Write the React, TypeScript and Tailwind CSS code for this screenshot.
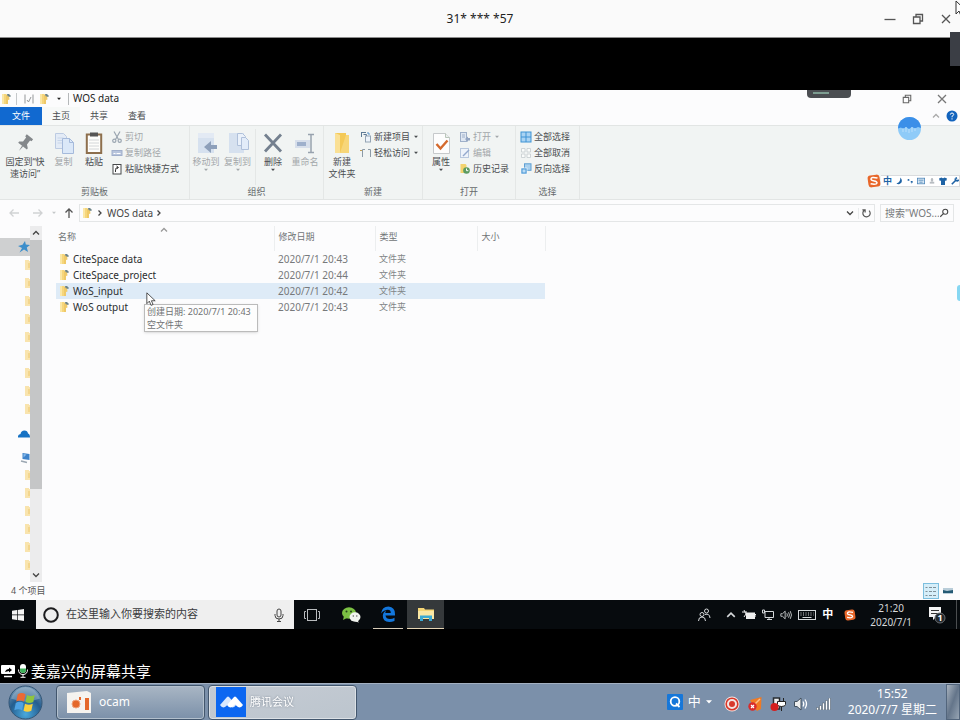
import React, { ReactNode } from "react";

type IconProps = { className?: string };

/* ---------- icons ---------- */

const Folder = ({ className = "h-3 w-3" }: IconProps) => (
  <svg viewBox="0 0 12 12" className={className}>
    <path d="M2 1h4l1 1v9H2z" fill="#f6d67c" />
    <path d="M2 1h2v10H2z" fill="#fbe7a6" />
    <path d="M6 1.500l3 1.500.500 3.500-1.500.500V11H6z" fill="#efc968" />
    <path d="M7 1h2l2 2-1 1-2.500-1z" fill="#6f8488" />
  </svg>
);

const Pin = () => (
  <svg viewBox="0 0 24 24" className="h-6 w-6">
    <g transform="rotate(38 12 12)" fill="#84888b">
      <path d="M8 4h8v2.500l-1.500.500v5l3 2.500v1.500H6.500v-1.500l3-2.500V7L8 6.500z" />
      <path d="M11.300 16h1.400l-.700 6z" />
    </g>
  </svg>
);

const CopyPages = () => (
  <svg viewBox="0 0 24 24" className="h-6 w-6">
    <path d="M3.500 2.500h8l3 3v12h-11z" fill="#e3ebf6" stroke="#bccbe2" />
    <path d="M5.500 7h6M5.500 9.500h6M5.500 12h6" stroke="#c7d5e9" />
    <path d="M10.500 7.500h7l4 4v11h-11z" fill="#dbe8f8" stroke="#a5badb" />
    <path d="M17.500 7.500v4h4" fill="none" stroke="#a5badb" />
  </svg>
);

const Clipboard = () => (
  <svg viewBox="0 0 24 24" className="h-6 w-6">
    <rect x="4.800" y="3.500" width="14.400" height="18.500" fill="#fdfdfb" stroke="#8d6f4d" strokeWidth="2" />
    <rect x="8" y="1.500" width="8" height="4" fill="#555" />
    <path d="M7 9h10M7 12h10M7 15h10M7 18h10" stroke="#d3d6d8" />
  </svg>
);

const Scissors = () => (
  <svg viewBox="0 0 12 12" className="h-3 w-3" fill="none" stroke="#9aa5b0" strokeWidth="1.200">
    <path d="M3 .500l4.500 8M9 .500l-4.500 8" />
    <circle cx="3.300" cy="9.700" r="1.600" />
    <circle cx="8.700" cy="9.700" r="1.600" />
  </svg>
);

const PathIcon = () => (
  <svg viewBox="0 0 12 12" className="h-3 w-3">
    <rect x="1" y="3.500" width="10" height="5" fill="#b7c4dc" stroke="#a1afcb" />
    <path d="M2.500 6.500h2M5.500 6.500h4" stroke="#fff" />
  </svg>
);

const ShortcutPaste = () => (
  <svg viewBox="0 0 12 12" className="h-3 w-3">
    <rect x="2" y="1.500" width="8" height="9.500" fill="#fff" stroke="#46484a" />
    <path d="M4.500 9V6.500q0-2 2.500-2M5.500 3l2 1.500-2 1.500" fill="none" stroke="#333" />
  </svg>
);

const MoveTo = () => (
  <svg viewBox="0 0 24 24" className="h-6 w-6">
    <rect x="4" y="2" width="16" height="20" fill="#d6e1ef" />
    <path d="M4 2h16v5H4z" fill="#e3eaf4" />
    <path d="M10 16l7-6v4h6v4h-6v4z" fill="#8ea0ba" />
  </svg>
);

const CopyTo = () => (
  <svg viewBox="0 0 24 24" className="h-6 w-6">
    <rect x="3" y="2" width="15" height="20" fill="#d6e1ef" />
    <path d="M11.500 2.500h5l3 3v9h-8z" fill="#eaf1fa" stroke="#afc0da" />
    <path d="M15.500 6.500h4l3 3v9h-7z" fill="#e2ecf9" stroke="#afc0da" />
  </svg>
);

const DeleteX = () => (
  <svg viewBox="0 0 24 24" className="h-6 w-6">
    <path d="M4 3.500l16 17M20 3.500L4 20.500" stroke="#74808f" strokeWidth="2.800" />
  </svg>
);

const Rename = () => (
  <svg viewBox="0 0 24 24" className="h-6 w-6">
    <rect x="2" y="9" width="15" height="8" fill="#d7dfeb" />
    <rect x="4" y="11" width="9" height="4" fill="#9eb0cc" />
    <path d="M15 3.500h6M18 3.500v18M15 21.500h6" stroke="#98a2ae" strokeWidth="1.500" fill="none" />
  </svg>
);

const NewFolder = () => (
  <svg viewBox="0 0 24 24" className="h-6 w-6">
    <path d="M5 2h11v20H5z" fill="#f4c957" />
    <path d="M5 2l5 2v18H5z" fill="#fae095" />
    <path d="M16 4h3v18h-9z" fill="#f7d679" />
  </svg>
);

const NewItem = () => (
  <svg viewBox="0 0 12 12" className="h-3 w-3" fill="none">
    <path d="M1 1.500h5M1.500 1v5M3.500 3.500h3v3" stroke="#5d7994" />
    <rect x="5.500" y="5" width="5" height="6" fill="#edf3fa" stroke="#94a4b4" />
    <path d="M7 2h2v2" stroke="#5891c7" />
  </svg>
);

const EasyAccess = () => (
  <svg viewBox="0 0 12 12" className="h-3 w-3" fill="none" stroke="#8c9aa6">
    <path d="M2.500 10V2.500H5M8 2.500h2.500V10" />
    <path d="M0 3.500h2" stroke="#c49f53" />
  </svg>
);

const Properties = () => (
  <svg viewBox="0 0 24 24" className="h-6 w-6">
    <path d="M4.500 2.500h12l4 4v16h-16z" fill="#fdfdfd" stroke="#c6c9cb" />
    <path d="M16.500 2.500v4h4" fill="#ecefee" stroke="#b9c6b9" />
    <path d="M7.500 13l4 4.500 7-8" fill="none" stroke="#d4692c" strokeWidth="2.400" />
  </svg>
);

const OpenIcon = () => (
  <svg viewBox="0 0 12 12" className="h-3 w-3">
    <rect x="1.500" y="1.500" width="6" height="9" fill="#dfe7f2" stroke="#9fb0c9" />
    <path d="M3 4h3M3 6h3" stroke="#9fb0c9" />
    <path d="M6 8l3-2.500v1.500h2v2.500H9V11z" fill="#93a5c2" />
  </svg>
);

const EditIcon = () => (
  <svg viewBox="0 0 12 12" className="h-3 w-3" fill="none">
    <rect x="1.500" y="1.500" width="8" height="9" fill="#eef3fa" stroke="#b9c8de" />
    <path d="M4 9l6-6" stroke="#94a9cd" strokeWidth="1.500" />
  </svg>
);

const HistoryIcon = () => (
  <svg viewBox="0 0 12 12" className="h-3 w-3">
    <path d="M1.500 1h5l1 1v8h-6z" fill="#f3d36f" />
    <circle cx="7.500" cy="7.500" r="3.300" fill="#5c9b60" />
    <path d="M7.500 5.500v2.200h1.800" stroke="#fff" fill="none" />
  </svg>
);

const SelectAll = () => (
  <svg viewBox="0 0 12 12" className="h-3 w-3">
    <rect x=".500" y=".500" width="11" height="11" fill="#3f93d4" />
    <path d="M1.500 1.500h4v4h-4zM6.500 1.500h4v4h-4zM1.500 6.500h4v4h-4zM6.500 6.500h4v4h-4z" fill="#a9d3f3" />
  </svg>
);

const SelectNone = () => (
  <svg viewBox="0 0 12 12" className="h-3 w-3">
    <path d="M1.500 1.500h3.500v3.500H1.500zM7 1.500h3.500v3.500H7zM1.500 7h3.500v3.500H1.500zM7 7h3.500v3.500H7z" fill="#fafcfb" stroke="#c5cbce" strokeWidth=".800" />
  </svg>
);

const Invert = () => (
  <svg viewBox="0 0 12 12" className="h-3 w-3">
    <rect x="4.500" y=".800" width="6.500" height="6.500" fill="#a9d0ee" stroke="#5d9fd2" />
    <rect x="1" y="5" width="6" height="6" fill="#4f9ad6" stroke="#fff" strokeWidth=".600" />
    <rect x="2.500" y="6.500" width="3" height="3" fill="#b9dcf6" />
  </svg>
);

const Restore = ({ className = "h-3 w-3" }: IconProps) => (
  <svg viewBox="0 0 12 12" className={className} fill="none" stroke="currentColor" strokeWidth="1.300">
    <path d="M1.500 4h6.500v6.500H1.500zM4 4V1.500h6.500V8H8" />
  </svg>
);

const Cross = ({ className = "h-3 w-3" }: IconProps) => (
  <svg viewBox="0 0 12 12" className={className} stroke="currentColor" strokeWidth="1.300">
    <path d="M2 2l8 8M10 2l-8 8" />
  </svg>
);

type Dir = "up" | "down" | "right";
const Chevron = ({ dir, className = "h-2 w-2" }: IconProps & { dir: Dir }) => (
  <svg viewBox="0 0 8 8" className={className} fill="none" stroke="currentColor" strokeWidth="1.300">
    <path d={dir === "up" ? "M1 5.500l3-3 3 3" : dir === "down" ? "M1 2.500l3 3 3-3" : "M2.500 1.500L5 4 2.500 6.500"} />
  </svg>
);

const Caret = ({ className = "h-1 w-1" }: IconProps) => (
  <svg viewBox="0 0 4 4" className={className}>
    <path d="M0 .800h4L2 3z" fill="currentColor" />
  </svg>
);

const Arrow = ({ d }: { d: string }) => (
  <svg viewBox="0 0 12 12" className="h-3 w-3" fill="none" stroke="currentColor" strokeWidth="1.300">
    <path d={d} />
  </svg>
);

const Pointer = ({ className = "h-[15px] w-[10px]" }: IconProps) => (
  <svg viewBox="0 0 12 18" className={className}>
    <path d="M1 1v13l3-3 2 5 2.500-1-2-4.500H11z" fill="#fff" stroke="#333" />
  </svg>
);

const SogouMark = ({ className = "h-3 w-3" }: IconProps) => (
  <svg viewBox="0 0 14 14" className={className}>
    <rect x="1" y="1" width="12" height="12" rx="3" fill="#e8672a" transform="rotate(-8 7 7)" />
    <path d="M10.500 4Q4 2.500 4 5q0 1.600 3.200 1.900Q10 7.300 10 8.800 9.500 11 3.600 9.800" stroke="#fff" strokeWidth="1.500" fill="none" />
  </svg>
);

const Speaker = ({ className = "h-3 w-3" }: IconProps) => (
  <svg viewBox="0 0 14 12" className={className} fill="none" stroke="currentColor">
    <path d="M1 4.500h2l3-3v9l-3-3H1z" />
    <path d="M8 4q1.200 2 0 4M10 2.800q2 3.200 0 6.400M12 1.500q2.800 4.500 0 9" />
  </svg>
);

/* ---------- ribbon ---------- */

function BigButton({ icon, lines, caret, dim, width }: { icon: ReactNode; lines: string[]; caret?: boolean; dim?: boolean; width: string }) {
  return (
    <button className={`flex flex-col items-center self-start pt-[2px] ${width} ${dim ? "text-[#a3a7aa]" : "text-[#4a4d50]"}`}>
      {icon}
      <span className="mt-px flex flex-col whitespace-nowrap text-[9px] leading-3">
        {lines.map((l) => (
          <span key={l}>{l}</span>
        ))}
      </span>
      {caret && <Caret />}
    </button>
  );
}

function SmallButton({ icon, label, caret, dim }: { icon: ReactNode; label: string; caret?: boolean; dim?: boolean }) {
  return (
    <button className={`flex h-4 items-center gap-[2px] whitespace-nowrap text-[9px] ${dim ? "text-[#a3a7aa]" : "text-[#4a4d50]"}`}>
      {icon}
      {label}
      {caret && <Caret className="ml-[2px] h-1 w-1" />}
    </button>
  );
}

function Group({ title, width, children }: { title: string; width: string; children: ReactNode }) {
  return (
    <section className={`flex flex-col border-r border-[#e4e7e6] ${width}`}>
      <div className="flex min-h-0 flex-1 pt-[3px]">{children}</div>
      <h2 className="text-center text-[9px] leading-[14px] text-[#666a6c]">{title}</h2>
    </section>
  );
}

function Ribbon() {
  return (
    <div className="flex h-[75px] shrink-0 overflow-hidden border-y border-[#e2e5e4] bg-[#f1f4f3]">
      <Group title="剪贴板" width="w-[190px]">
        <BigButton icon={<Pin />} lines={["固定到“快", "速访问”"]} width="w-[50px]" />
        <BigButton icon={<CopyPages />} lines={["复制"]} dim width="w-[27px]" />
        <BigButton icon={<Clipboard />} lines={["粘贴"]} width="w-[34px]" />
        <div className="flex flex-col">
          <SmallButton icon={<Scissors />} label="剪切" dim />
          <SmallButton icon={<PathIcon />} label="复制路径" dim />
          <SmallButton icon={<ShortcutPaste />} label="粘贴快捷方式" />
        </div>
      </Group>
      <Group title="组织" width="w-[134px]">
        <div className="flex border-r border-[#e4e7e6] pr-[2px]">
          <BigButton icon={<MoveTo />} lines={["移动到"]} caret dim width="w-8" />
          <BigButton icon={<CopyTo />} lines={["复制到"]} caret dim width="w-[31px]" />
        </div>
        <BigButton icon={<DeleteX />} lines={["删除"]} caret width="w-[34px]" />
        <BigButton icon={<Rename />} lines={["重命名"]} dim width="w-[30px]" />
      </Group>
      <Group title="新建" width="w-[99px]">
        <BigButton icon={<NewFolder />} lines={["新建", "文件夹"]} width="w-9" />
        <div className="flex flex-col">
          <SmallButton icon={<NewItem />} label="新建项目" caret />
          <SmallButton icon={<EasyAccess />} label="轻松访问" caret />
        </div>
      </Group>
      <Group title="打开" width="w-[93px]">
        <BigButton icon={<Properties />} lines={["属性"]} caret width="w-9" />
        <div className="flex flex-col">
          <SmallButton icon={<OpenIcon />} label="打开" caret dim />
          <SmallButton icon={<EditIcon />} label="编辑" dim />
          <SmallButton icon={<HistoryIcon />} label="历史记录" />
        </div>
      </Group>
      <Group title="选择" width="w-[64px]">
        <div className="flex flex-col pl-1">
          <SmallButton icon={<SelectAll />} label="全部选择" />
          <SmallButton icon={<SelectNone />} label="全部取消" />
          <SmallButton icon={<Invert />} label="反向选择" />
        </div>
      </Group>
    </div>
  );
}

/* ---------- explorer ---------- */

function ExplorerTitle() {
  return (
    <div className="flex h-[17px] shrink-0 items-center text-[10px] text-[#222]">
      <Folder />
      <span className="ml-1 h-3 w-px bg-[#c5c8ca]" />
      <svg viewBox="0 0 10 12" className="ml-[7px] h-3 w-[10px]" fill="none" stroke="#949799">
        <path d="M1 1.500v9M9 1.500v9M3 7l1.500 2L7 4" />
      </svg>
      <Folder className="ml-1 h-3 w-3" />
      <Caret className="ml-[7px] h-1 w-1" />
      <span className="ml-[7px] h-3 w-px bg-[#b5b8ba]" />
      <span className="ml-1">WOS data</span>
      <span className="flex-1" />
      <button aria-label="还原" className="text-[#666]">
        <Restore className="h-[10px] w-[10px]" />
      </button>
      <button aria-label="关闭" className="mx-3 ml-6 text-[#777]">
        <Cross />
      </button>
    </div>
  );
}

function Tabs() {
  return (
    <nav className="flex h-[18px] shrink-0 items-stretch text-[9px] text-[#4a4d50]">
      <button className="w-[42px] bg-[#1169d0] text-white">文件</button>
      <button className="w-[38px] bg-[#f7f9f8]">主页</button>
      <button className="w-[38px]">共享</button>
      <button className="w-[38px]">查看</button>
      <span className="flex-1" />
      <button aria-label="折叠功能区" className="text-[#aaa]">
        <Chevron dir="up" />
      </button>
      <button aria-label="帮助" className="mr-[2px] ml-[6px] self-center">
        <svg viewBox="0 0 12 12" className="h-3 w-3">
          <circle cx="6" cy="6" r="5.500" fill="#1263bd" />
          <path d="M4.300 4.600Q4.500 3 6 3t1.700 1.400Q7.700 5.500 6 6.300v1M6 8.300v1.200" stroke="#fff" fill="none" />
        </svg>
      </button>
    </nav>
  );
}

function AddressBar() {
  return (
    <div className="flex h-[26px] shrink-0 items-center text-[10px] text-[#444]">
      <button aria-label="后退" className="ml-2 text-[#d0d2d3]"><Arrow d="M11 6H2M5.500 2.500L2 6l3.500 3.500" /></button>
      <button aria-label="前进" className="ml-3 text-[#d0d2d3]"><Arrow d="M1 6h9M6.500 2.500L10 6l-3.500 3.500" /></button>
      <Caret className="ml-2 h-1 w-1 text-[#c5c8ca]" />
      <button aria-label="上移" className="ml-[7px] text-[#555]"><Arrow d="M6 11V2M2.500 5.500L6 2l3.500 3.500" /></button>
      <div className="ml-1 flex h-[18px] flex-1 items-center border border-[#e4e6e7] pl-px">
        <Folder />
        <Chevron dir="right" className="mx-[3px] h-2 w-2" />
        <span>WOS data</span>
        <Chevron dir="right" className="ml-[2px] h-2 w-2" />
        <span className="flex-1" />
        <button aria-label="历史位置" className="mr-1"><Chevron dir="down" /></button>
        <button aria-label="刷新" className="border-l border-[#e9ebec] pr-[2px] pl-[2px]">
          <svg viewBox="0 0 12 12" className="h-[11px] w-[11px]" fill="none" stroke="#555" strokeWidth="1.300">
            <path d="M8.800 2.800a4 4 0 1 1-5.200-.300M1.500 2h3v3" />
          </svg>
        </button>
      </div>
      <label className="mr-[6px] ml-[5px] flex h-[18px] w-[74px] items-center border border-[#e4e6e7] pl-1">
        <input aria-label="搜索 WOS data" placeholder={'搜索"WOS...'} className="w-[54px] bg-transparent text-[10px] outline-none placeholder:text-[#77797b]" />
        <svg viewBox="0 0 12 12" className="h-[10px] w-[10px]" fill="none" stroke="#444" strokeWidth="1.300">
          <circle cx="7.500" cy="4.500" r="3" />
          <path d="M5.300 6.800L1.500 10.500" />
        </svg>
      </label>
    </div>
  );
}

function NavFolder() {
  return (
    <li className="flex h-[18px] items-center justify-end">
      <svg viewBox="0 0 5 12" className="h-3 w-[5px]">
        <path d="M0 1h4v1h1v9H0z" fill="#f9e4ae" />
        <path d="M3 4h2v5H3z" fill="#f3d68f" />
      </svg>
    </li>
  );
}

function NavPane() {
  return (
    <div className="flex w-[42px] shrink-0">
      <ul className="w-[30px] overflow-hidden pt-3">
        <li className="flex h-[18px] items-center justify-end bg-[#cfd0d1]">
          <svg viewBox="0 0 12 12" className="h-3 w-3">
            <path d="M7 0l.800 3.500L12 4 8.800 6.500 10 11 6 8.500 1.500 11.500 4 7 0 5l4.500-1.200z" fill="#3c8ecb" />
          </svg>
        </li>
        {Array.from({ length: 9 }, (_, i) => <NavFolder key={i} />)}
        <li className="flex h-8 items-center justify-end">
          <svg viewBox="0 0 12 8" className="h-2 w-3">
            <path d="M0 7.500Q-.500 4.500 2.500 4 3 .500 6.500.500 9.500.500 10 3.500 12 4 12 7.500z" fill="#1672c4" />
          </svg>
        </li>
        <li className="flex h-4 items-center justify-end">
          <svg viewBox="0 0 10 12" className="h-3 w-[10px]">
            <path d="M2.500 1L9.500 2v6l-7-1z" fill="#3f83ca" />
            <path d="M3.500 2l3 .500-3 3z" fill="#8abcec" />
            <path d="M1 9l6 1.500" stroke="#9ba7b2" strokeWidth="1.500" />
          </svg>
        </li>
        {Array.from({ length: 6 }, (_, i) => <NavFolder key={i} />)}
      </ul>
      <div className="flex w-3 flex-col items-center bg-[#ececed] text-[#444]">
        <Chevron dir="up" className="my-[3px] h-2 w-2 shrink-0" />
        <div className="w-full grow-[76] bg-[#c5c6c7]" />
        <div className="grow-[24]" />
        <Chevron dir="down" className="my-[3px] h-2 w-2 shrink-0" />
      </div>
    </div>
  );
}

const files = [
  { name: "CiteSpace data", date: "2020/7/1 20:43" },
  { name: "CiteSpace_project", date: "2020/7/1 20:44" },
  { name: "WoS_input", date: "2020/7/1 20:42" },
  { name: "WoS output", date: "2020/7/1 20:43" },
];

function FileList() {
  return (
    <div className="relative flex-1 pl-[14px]">
      <Chevron dir="up" className="absolute top-0 left-[118px] h-2 w-2 text-[#999]" />
      <table className="w-[489px] table-fixed border-collapse text-left text-[10px]">
        <colgroup>
          <col className="w-[218px]" />
          <col className="w-[101px]" />
          <col className="w-[102px]" />
          <col className="w-[68px]" />
        </colgroup>
        <thead>
          <tr className="h-[25px] text-[9px] text-[#707476]">
            {["名称", "修改日期", "类型", "大小"].map((h) => (
              <th key={h} className="border-r border-[#eceeef] p-0 pb-1 pl-1 font-normal first:pl-[2px]">{h}</th>
            ))}
          </tr>
        </thead>
        <tbody>
          {files.map((f) => (
            <tr key={f.name} className={f.name === "WoS_input" ? "bg-[#deebf7]" : ""}>
              <td className="h-4 p-0 leading-4 text-[#2a2c2e]">
                <span className="flex items-center gap-[3px] pl-[2px]">
                  <Folder />
                  {f.name}
                </span>
              </td>
              <td className="p-0 pl-1 leading-4 text-[#77797b]">{f.date}</td>
              <td className="p-0 pl-1 text-[9px] leading-4 text-[#818587]">文件夹</td>
              <td className="p-0" />
            </tr>
          ))}
        </tbody>
      </table>
      <div role="tooltip" className="absolute top-[78px] left-[102px] border border-[#bbb] bg-[#fdfdfd] pr-[6px] pl-[2px] text-[9px] leading-[13px] whitespace-nowrap text-[#707274] shadow-sm">
        <p>创建日期: 2020/7/1 20:43</p>
        <p>空文件夹</p>
      </div>
      <div className="absolute top-[66px] left-[104px]"><Pointer /></div>
    </div>
  );
}

function SogouBar() {
  return (
    <div className="absolute top-[84px] right-0 flex items-center">
      <SogouMark className="z-10 h-[14px] w-[14px]" />
      <div className="flex h-3 items-center gap-1 border border-l-0 border-[#dadcde] bg-white pl-[2px] text-[9px] font-bold text-[#1e63a5]">
        <span>中</span>
        <svg viewBox="0 0 8 8" className="h-2 w-[7px]"><path d="M5 0q4 5-1 7.500-2 .500-3.500-1Q5 6 5 0z" fill="#1e63a5" /></svg>
        <svg viewBox="0 0 8 8" className="h-2 w-[6px]" fill="#1e63a5"><circle cx="2" cy="2.500" r="1.300" /><path d="M5 4h2.500v2L6 7.500V6H5z" /></svg>
        <svg viewBox="0 0 10 8" className="h-2 w-2"><rect x=".500" y=".500" width="9" height="7" fill="#d6e6f4" stroke="#4d86b8" /><path d="M2 3h6M3 5.500h4" stroke="#4d86b8" /></svg>
        <svg viewBox="0 0 8 8" className="h-2 w-[6px]" fill="#b7bcc1"><rect x="2.500" width="3" height="5" rx="1.500" /><path d="M1 5h6v2.500H1z" /></svg>
        <svg viewBox="0 0 8 8" className="h-2 w-2" fill="#1e63a5"><path d="M0 1.500L2.500.500q1.500 1.500 3 0L8 1.500 7.200 4 6 3.500V8H2V3.500L.800 4z" /></svg>
        <svg viewBox="0 0 8 8" className="h-2 w-2" fill="none" stroke="#1e63a5" strokeWidth="1.600"><path d="M.800 7.200l4-4M4.200 1.500q0 2.500 2.800 2.500M7 4l.500-1.500M4.500 1.500L6 .800" /></svg>
      </div>
    </div>
  );
}

function Explorer() {
  return (
    <main className="relative flex flex-1 flex-col overflow-hidden bg-[#fcfcfd]">
      <ExplorerTitle />
      <Tabs />
      <Ribbon />
      <AddressBar />
      <div className="flex flex-1">
        <NavPane />
        <FileList />
      </div>
      <footer className="flex h-[18px] shrink-0 items-center pr-[7px] pl-[11px] text-[9px] text-[#555]">
        <span className="flex-1">4 个项目</span>
        <button aria-label="详细信息" className="mr-1 border border-[#7dbfdf] bg-[#d6eef9]">
          <svg viewBox="0 0 14 14" className="h-[14px] w-[14px]" stroke="#7f9099">
            <path d="M1.500 3.500h2M5 3.500h3M9 3.500h3M1.500 7.500h2M5 7.500h3M9 7.500h3M1.500 11.500h2M5 11.500h3M9 11.500h3" />
          </svg>
        </button>
        <button aria-label="大图标">
          <svg viewBox="0 0 10 6" className="h-[6px] w-[10px]">
            <rect width="10" height="6" fill="#b9cdd9" />
            <path d="M0 2l4 1 6-1v3H0z" fill="#245a74" />
          </svg>
        </button>
      </footer>

      <div className="absolute top-0 right-[109px] h-2 w-11 rounded-b bg-[#4b4e52]">
        <div className="mt-[2px] ml-[6px] h-[2px] w-4 bg-[#7d9d91]" />
      </div>
      <div className="absolute top-[27px] right-[39px] h-[23px] w-[23px] overflow-hidden rounded-full bg-[#8fcbf8]">
        <svg viewBox="0 0 23 23">
          <path d="M0 0h23v11l-3-1-3 1.500-3-1.500-3 2-3-2-3 2-2-1.500-3 1z" fill="#3b8fe8" />
          <path d="M5 11v4M8 10v5M11 12v4M14 10v5M17 11v3" stroke="#b9defb" />
        </svg>
      </div>
      <SogouBar />
      <div className="absolute top-[195px] right-0 h-4 w-[3px] rounded-l-full bg-[#86d7f2]" />
    </main>
  );
}

/* ---------- shared screen taskbar ---------- */

function SharedTaskbar() {
  return (
    <div className="flex h-[29px] shrink-0 items-center bg-[#070b0e] text-[#d5d8da]">
      <button aria-label="开始" className="flex w-9 justify-center">
        <svg viewBox="0 0 12 12" className="h-3 w-3" fill="#f3f3f3">
          <path d="M0 1.700l5-.700v4.600H0zM5.700.900L12 0v5.600H5.700zM0 6.300h5v4.700l-5-.700zM5.700 6.300H12V12l-6.300-.900z" />
        </svg>
      </button>
      <label className="flex h-full w-[258px] items-center bg-[#efefef] px-[7px]">
        <svg viewBox="0 0 16 16" className="h-4 w-4" fill="none" stroke="#1c1c1e" strokeWidth="2">
          <circle cx="8" cy="8" r="6.800" />
        </svg>
        <input aria-label="在这里输入你要搜索的内容" placeholder="在这里输入你要搜索的内容" className="ml-[7px] w-full min-w-0 flex-1 bg-transparent text-[11px] outline-none placeholder:text-[#3b3c3e]" />
        <svg viewBox="0 0 12 14" className="mr-[2px] h-[14px] w-3" fill="none" stroke="#444">
          <rect x="4" y="1" width="4" height="8" rx="2" />
          <path d="M2 6v1.500q0 3.500 4 3.500t4-3.500V6M6 11v2.500M4 13.500h4" />
        </svg>
      </label>
      <button aria-label="任务视图" className="flex w-9 justify-center">
        <svg viewBox="0 0 16 12" className="h-3 w-4" fill="none" stroke="#b9bcbe">
          <rect x="3.500" y=".500" width="9" height="11" />
          <path d="M2 2.500H.500v7H2M14 2.500h1.500v7H14" />
        </svg>
      </button>
      <button aria-label="微信" className="ml-[2px] flex w-[37px] justify-center">
        <svg viewBox="0 0 20 16" className="h-4 w-5">
          <ellipse cx="8" cy="6" rx="7" ry="5.800" fill="#7bc143" />
          <path d="M3 9l-1 4 4-2z" fill="#7bc143" />
          <circle cx="5.500" cy="4.500" r="1" fill="#24421a" />
          <circle cx="10" cy="4.500" r="1" fill="#24421a" />
          <ellipse cx="14" cy="10" rx="5.500" ry="4.700" fill="#f1f4ef" />
          <path d="M16 13l2 2.500-4-1z" fill="#f1f4ef" />
          <circle cx="12.300" cy="9" r=".700" fill="#555" />
          <circle cx="15.800" cy="9" r=".700" fill="#555" />
        </svg>
      </button>
      <button aria-label="Edge" className="mr-1 ml-1 flex h-full w-[30px] items-center justify-center border-b border-[#d8cdb9]">
        <svg viewBox="0 0 16 16" className="h-4 w-4">
          <path d="M1 7.500Q2 .500 8.500.500 15 1 15 8v1.500H5.500q.500 3.500 4.500 3.500 2.500 0 4.500-1.200V15Q12 16 9.300 16 2.500 15.500 2.800 9.500 3.200 6 6.500 4.300 5.300 5.500 5.300 7h5.500q0-3.200-3-3.200Q4 3.800 1 7.500z" fill="#1377dc" />
        </svg>
      </button>
      <button aria-label="文件资源管理器" className="flex h-full w-[37px] items-center justify-center border-b border-[#e6d6b5] bg-[#35393b]">
        <svg viewBox="0 0 16 14" className="h-[14px] w-4">
          <path d="M0 1h6l1 1.500h9V12H0z" fill="#f4d575" />
          <path d="M0 4h16v8H0z" fill="#fae7a4" />
          <path d="M2 14V8.500h12V14h-3v-3H5v3z" fill="#3ba9d3" />
        </svg>
      </button>
      <span className="flex-1" />
      <div className="flex items-center gap-[6px]">
        <svg viewBox="0 0 14 14" className="mr-[9px] h-[14px] w-[14px]" fill="none" stroke="currentColor">
          <circle cx="5" cy="6.500" r="2" /><path d="M1.500 13q0-4 3.500-4t3.500 4" /><circle cx="9.500" cy="3" r="2" /><path d="M8 6.500q4.500-1.500 5 3.500" />
        </svg>
        <Chevron dir="up" className="h-[10px] w-[10px]" />
        <svg viewBox="0 0 14 10" className="h-[10px] w-[14px]">
          <rect x="4" y="2.500" width="9" height="6.500" fill="#eee" /><path d="M0 2h5M2 0l2 4-2 3M13 4.500h1v2.500" stroke="#eee" fill="none" />
        </svg>
        <svg viewBox="0 0 12 12" className="h-3 w-3" fill="none" stroke="currentColor">
          <path d="M3 2.500h8.500v6H3zM5 10.500h5M7 8.500v2M.500 1h2v3h-2z" />
        </svg>
        <Speaker />
        <svg viewBox="0 0 18 12" className="h-3 w-[18px]" fill="none" stroke="currentColor">
          <rect x=".500" y="1.500" width="17" height="9" /><path d="M2.500 4h13M2.500 6h13" strokeDasharray="1 1.500" /><path d="M4.500 8.500h9" />
        </svg>
        <span className="text-[11px] font-bold text-white">中</span>
        <span className="ml-[5px]"><SogouMark /></span>
      </div>
      <div className="ml-[14px] text-center text-[10px] leading-[14px] whitespace-nowrap">
        <p>21:20</p>
        <p>2020/7/1</p>
      </div>
      <button aria-label="通知" className="relative mr-[10px] ml-4">
        <svg viewBox="0 0 18 18" className="h-[18px] w-[18px]">
          <path d="M1 1h12v10H8l-3 3v-3H1z" fill="#f3f3f3" />
          <path d="M3 4.500h8M3 7.500h8" stroke="#333" />
          <circle cx="12" cy="12" r="5" fill="#23282c" stroke="#6c7074" />
        </svg>
        <span className="absolute right-0 bottom-0 w-3 text-center text-[9px] leading-3 font-bold text-white">1</span>
      </button>
      <span className="mr-[3px] h-full w-px bg-[#4b4e50]" />
    </div>
  );
}

/* ---------- host taskbar ---------- */

function HostTaskbar() {
  return (
    <div className="flex h-[37px] shrink-0 items-center border-t border-[#a3b0c1] bg-[#7b90aa] text-white">
      <button aria-label="开始" className="flex w-14 pl-2">
        <svg viewBox="0 0 36 36" className="h-[35px] w-[35px]">
          <defs>
            <radialGradient id="orb" cx=".5" cy=".85" r=".8">
              <stop offset="0" stopColor="#49a9dd" /><stop offset=".6" stopColor="#245d8f" /><stop offset="1" stopColor="#6b91b1" />
            </radialGradient>
          </defs>
          <circle cx="18" cy="18" r="17" fill="url(#orb)" stroke="#335575" />
          <path d="M3 14Q8 2 18 2t15 12Q18 20 3 14z" fill="#fff" opacity=".25" />
          <path d="M10 9.500q4-2.500 8 0l-1.500 7.500q-4-2.200-8 0z" fill="#ec6a35" />
          <path d="M19.500 10.200q4 2.200 8 0L26 17.500q-4 2.200-8 0z" fill="#8fc53f" />
          <path d="M8 18.500q4-2.500 8 0L14.500 26q-4-2.200-8 0z" fill="#4fa2e4" />
          <path d="M17.500 19.200q4 2.200 8 0L24 26.500q-4 2.200-8 0z" fill="#fbcf3c" />
        </svg>
      </button>
      <button className="flex h-[35px] w-[149px] items-center rounded-sm border border-[#42566d] bg-linear-to-b from-[#a9b6c4] to-[#7b90a9] pl-[10px] text-xs shadow-[inset_0_0_0_1px_#b3c0cd]">
        <svg viewBox="0 0 24 22" className="mr-2 h-[22px] w-6">
          <path d="M0 2l20-2 4 2v20H0z" fill="#f5f3ef" />
          <circle cx="9" cy="13" r="4" fill="#e4682b" stroke="#efa27e" strokeWidth="1" />
          <path d="M18 7h4v12h-4zM12 6h2v3h-2z" fill="#e4682b" />
        </svg>
        ocam
      </button>
      <button className="ml-[3px] flex h-[35px] w-[149px] items-center rounded-sm border border-[#42566d] bg-linear-to-br from-[#c5cbd3] to-[#bcc5ce] pl-[7px] text-[11px] shadow-[inset_0_0_0_1px_#dce1e6]">
        <svg viewBox="0 0 30 30" className="mr-1 h-[30px] w-[30px]">
          <rect width="30" height="30" fill="#0c67f1" />
          <path d="M4 18l7-8q1-1 2 0l7 8q-2 3.500-5 2l-3-2.500-3 2.500q-3 1.500-5-2z" fill="#d9e8fd" />
          <path d="M11 18l7-8q1-1 2 0l7 8q-2 3.500-5 2l-3-2.500-3 2.500q-3 1.500-5-2z" fill="#fff" />
        </svg>
        <span className="drop-shadow-[0_0_1px_#7f8996]">腾讯会议</span>
      </button>
      <span className="flex-1" />
      <div className="flex items-center">
        <svg viewBox="0 0 16 16" className="h-4 w-4">
          <rect width="16" height="16" rx="1" fill="#1677d9" />
          <circle cx="8" cy="7.500" r="4.300" fill="none" stroke="#fff" strokeWidth="1.800" /><path d="M9 9.500l3.500 3.500" stroke="#fff" strokeWidth="1.800" />
        </svg>
        <span className="ml-[5px] text-[13px]">中</span>
        <Caret className="mr-3 ml-[5px] h-[6px] w-[6px]" />
        <svg viewBox="0 0 16 16" className="mt-[3px] mr-2 h-4 w-4">
          <circle cx="8" cy="8" r="7.500" fill="#f3e6e4" /><circle cx="8" cy="8" r="5.800" fill="none" stroke="#d8392c" strokeWidth="1.600" /><circle cx="8" cy="8" r="3" fill="#d8392c" />
        </svg>
        <svg viewBox="0 0 14 14" className="mt-[3px] mr-2 h-[14px] w-[14px]">
          <path d="M2 3L13.500 0 13 12 9 14 5 9z" fill="#f07a24" /><path d="M6 8l6-6" stroke="#fbc08c" strokeWidth="1.500" />
          <circle cx="4.500" cy="9.500" r="4.200" fill="#d92b2b" /><path d="M3 8l3 3M6 8l-3 3" stroke="#fff" strokeWidth="1.200" />
        </svg>
        <svg viewBox="0 0 16 16" className="mt-[3px] mr-2 h-4 w-4">
          <rect x="3.500" y="2" width="6" height="11" fill="#eee" stroke="#2a2f34" strokeWidth="1.500" /><path d="M9.500 2v4M13.500 2v4M7.500 5.500h8v3q0 2-4 2t-4-2zM11.500 10.500V15" fill="#fff" stroke="#222" />
          <circle cx="4.500" cy="11" r="4" fill="#d51f1f" />
        </svg>
        <svg viewBox="0 0 14 14" className="mt-[3px] mr-2 h-[14px] w-[14px]" fill="none" stroke="#fff">
          <path d="M.500 4.500H3l4-3.500v12L3 9.500H.500z" fill="#eee" stroke="#42505f" /><path d="M9 4.500q1.500 2.500 0 5M11 2.500q3 4.500 0 9" strokeWidth="1.300" />
        </svg>
        <svg viewBox="0 0 15 12" className="mt-[3px] mr-[17px] h-3 w-[15px]" fill="#fff" stroke="#42505f" strokeWidth=".500">
          <path d="M.500 9.500h2V12h-2zM3.500 7.500h2V12h-2zM6.500 5h2v7h-2zM9.500 2.500h2V12h-2zM12.500 0h2v12h-2z" />
        </svg>
      </div>
      <div className="text-center text-[12px] leading-4 whitespace-nowrap">
        <p>15:52</p>
        <p>2020/7/7 星期二</p>
      </div>
      <button aria-label="显示桌面" className="ml-[9px] h-full w-[14px] border border-[#52657c] bg-linear-to-br from-[#a9b3be] via-[#64758a] to-[#97a5b4]" />
    </div>
  );
}

export default function App() {
  return (
    <div className="relative flex min-h-screen flex-col overflow-hidden bg-black font-['Noto_Sans','Noto_Sans_CJK_SC',sans-serif]">
      <header className="flex h-[38px] shrink-0 items-center border-b border-[#8c8c8c] bg-[#fafafa] text-[#555]">
        <span className="w-[88px]" />
        <h1 className="flex-1 text-center text-xs text-[#222]">31* *** *57</h1>
        <div className="flex w-[88px] gap-4 pl-3">
          <button aria-label="最小化">
            <svg viewBox="0 0 12 12" className="h-3 w-3" stroke="currentColor" strokeWidth="1.300"><path d="M.500 6.500h11" /></svg>
          </button>
          <button aria-label="还原"><Restore /></button>
          <button aria-label="关闭"><Cross /></button>
        </div>
      </header>
      <div className="h-[52px] shrink-0" />
      <Explorer />
      <SharedTaskbar />
      <div className="flex h-[54px] shrink-0 items-end px-px pb-px text-white">
        <svg viewBox="0 0 14 14" className="mb-1 h-[14px] w-[14px]">
          <rect y="1" width="14" height="9" rx="1" fill="#fff" /><path d="M4 8q1-3 4-3V3.500l3 2.500-3 2.500V7z" fill="#000" /><path d="M3 12.500h8" stroke="#fff" strokeWidth="1.500" />
        </svg>
        <svg viewBox="0 0 12 14" className="mx-[2px] mb-1 h-[14px] w-3">
          <rect x="3" width="6" height="9" rx="3" fill="#fff" /><path d="M3 4.500h6V6q0 3-3 3T3 6z" fill="#3fb25a" /><path d="M1.500 5.500q0 5 4.500 5t4.500-5M6 10.500V13M3.500 13.300h5" stroke="#fff" fill="none" />
        </svg>
        <p className="text-[15px] leading-[22px]">姜嘉兴的屏幕共享</p>
      </div>
      <HostTaskbar />
      <div className="absolute top-8 right-0 h-[34px] w-[10px] bg-[#3b3e45]" />
      <div className="absolute top-0 right-[-7px]"><Pointer className="h-[18px] w-3" /></div>
    </div>
  );
}
